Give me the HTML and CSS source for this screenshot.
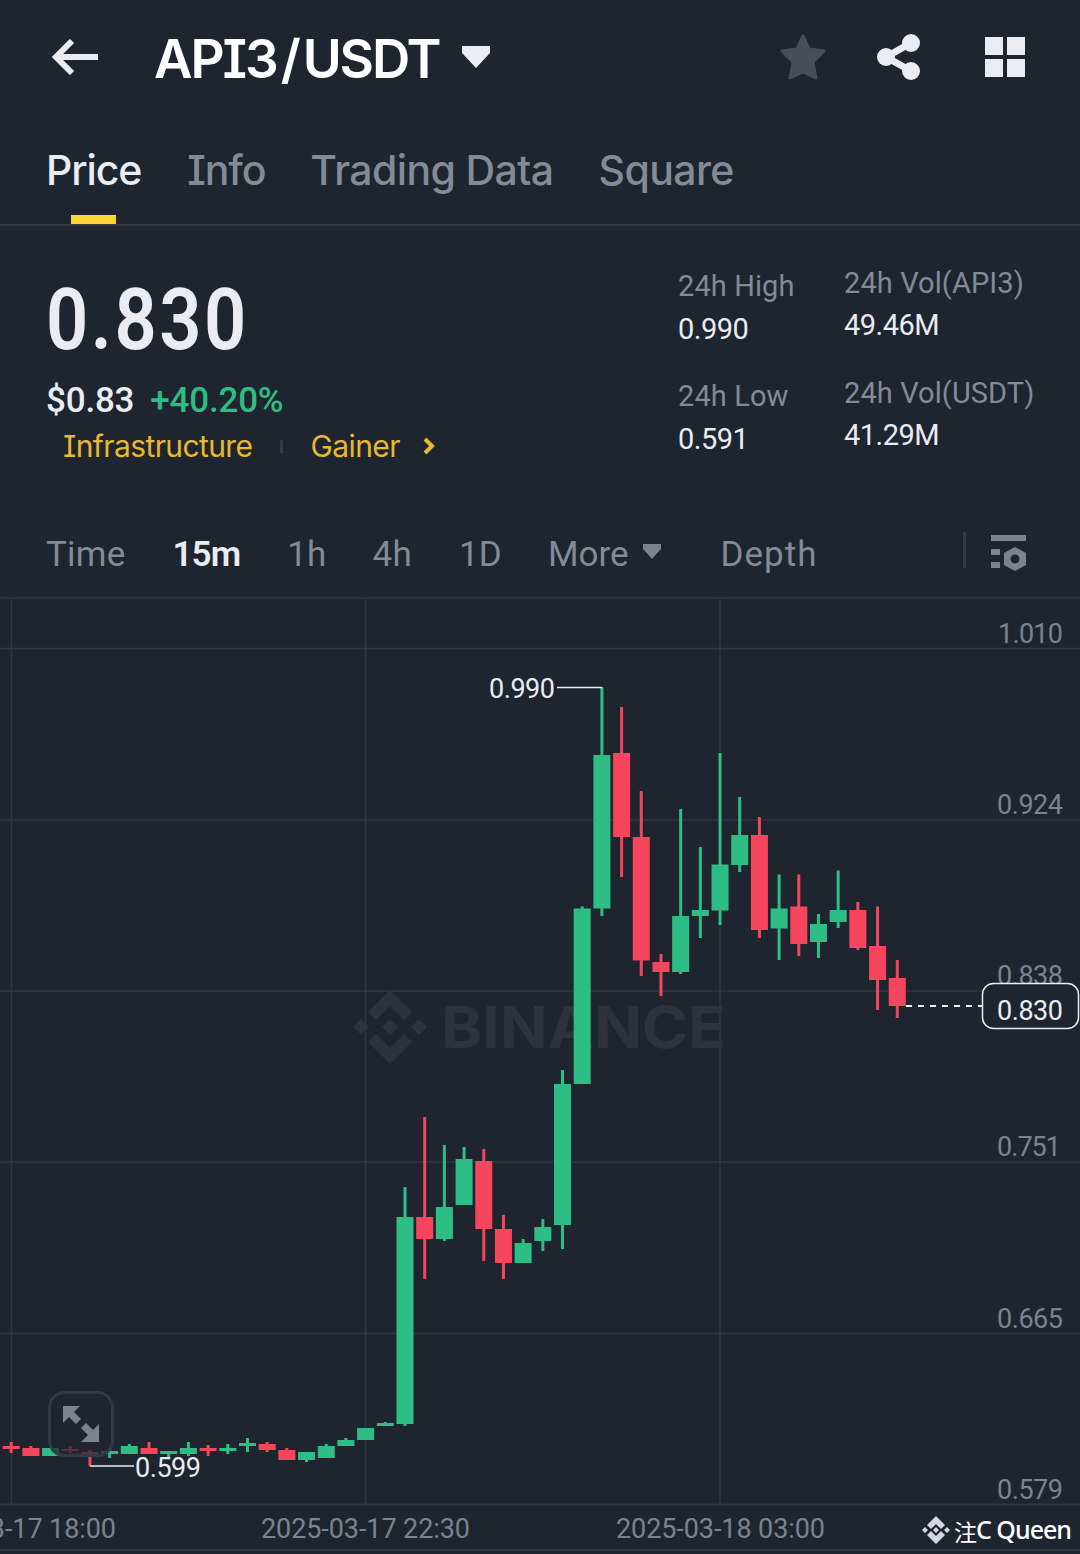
FILE: index.html
```html
<!DOCTYPE html>
<html lang="en">
<head>
    <meta charset="UTF-8">
    <meta name="viewport" content="width=device-width, initial-scale=1.0">
    <title>API3/USDT</title>
    <link rel="stylesheet" href="styles.css">
</head>
<body>
    <header class="header">
        <svg class="back" width="46" height="36" viewBox="0 0 46 36"><path d="M20 2L4 18l16 16M4 18h42" /></svg>
        <h1 class="pair">API3<span class="slash">/</span>USDT</h1>
        <svg class="pair-caret" width="28" height="22" viewBox="0 0 28 22"><path d="M0 0h28v7L14 22 0 7z" /></svg>
        <div class="header-actions">
            <svg class="star" width="46" height="48" viewBox="0 0 46 48"><path d="M23 3l6 13 15 2-11 11 3 16-13-6-13 6 3-16L2 18l15-2z" /></svg>
            <svg class="share" width="44" height="48" viewBox="0 0 44 48">
                <path d="M9 24L34 10M9 24L34 38" />
                <circle cx="9" cy="24" r="9" />
                <circle cx="34" cy="10" r="9" />
                <circle cx="34" cy="38" r="9" />
            </svg>
            <svg class="apps" width="40" height="40" viewBox="0 0 40 40"><path d="M0 0h18v18H0zM22 0h18v18H22zM0 22h18v18H0zM22 22h18v18H22z" /></svg>
        </div>
    </header>

    <nav class="tabs">
        <a class="tab active">Price</a>
        <a class="tab info">Info</a>
        <a class="tab trading">Trading Data</a>
        <a class="tab square">Square</a>
    </nav>

    <section class="summary">
        <div class="quote">
            <div class="last-price">0.830</div>
            <div class="change-row">
                <span class="fiat">$0.83</span>
                <span class="change">+40.20%</span>
            </div>
            <div class="tags">
                <span class="tag">Infrastructure</span>
                <span class="tag-divider"></span>
                <span class="tag gainer">Gainer</span>
                <svg class="tag-arrow" width="12" height="18" viewBox="0 0 12 18"><path d="M2 2l7 7-7 7" /></svg>
            </div>
        </div>
        <div class="stats">
            <div class="stat-col">
                <div class="stat">
                    <div class="stat-label">24h High</div>
                    <div class="stat-value">0.990</div>
                </div>
                <div class="stat">
                    <div class="stat-label">24h Low</div>
                    <div class="stat-value">0.591</div>
                </div>
            </div>
            <div class="stat-col volume">
                <div class="stat">
                    <div class="stat-label">24h Vol(API3)</div>
                    <div class="stat-value">49.46M</div>
                </div>
                <div class="stat">
                    <div class="stat-label">24h Vol(USDT)</div>
                    <div class="stat-value">41.29M</div>
                </div>
            </div>
        </div>
    </section>

    <div class="intervals">
        <span class="interval time">Time</span>
        <span class="interval active">15m</span>
        <span class="interval h1">1h</span>
        <span class="interval h4">4h</span>
        <span class="interval d1">1D</span>
        <span class="interval more">More</span>
        <svg class="more-caret" width="18" height="15" viewBox="0 0 18 15"><path d="M0 0h18v5L9 15 0 5z" /></svg>
        <span class="interval depth">Depth</span>
        <span class="interval-divider"></span>
        <svg class="settings" width="35" height="36" viewBox="0 0 35 36">
            <path d="M0 0h35v6H0zM0 14h9v6H0zM0 27h9v6H0z" />
            <path fill-rule="evenodd" d="M24 12l11 6v12l-11 6-11-6V18zM24 19.500a4.500 4.500 0 1 0 0 9a4.500 4.500 0 1 0 0-9z" />
        </svg>
    </div>

    <div class="chart">
        <svg width="1080" height="955" viewBox="0 599 1080 955">
            <g class="grid">
                <path d="M0 648.500H1080M0 820H1080M0 991H1080M0 1162H1080M0 1333.500H1080" />
                <path d="M11.500 599V1504M365.500 599V1504M720 599V1504" />
                <path class="axis-line" d="M0 1504.500H1080M0 1550H1080" />
            </g>

            <g class="watermark">
                <path d="M390 990l22 22-8 8-14-14-14 14-8-8zM390 1064l22-22-8-8-14 14-14-14-8 8zM390 1019l8 8-8 8-8-8zM361 1019l8 8-8 8-8-8zM419 1019l8 8-8 8-8-8z" />
                <text x="441" y="1047.500" textLength="285" lengthAdjust="spacingAndGlyphs">BINANCE</text>
            </g>

            <g id="candles"></g>

            <g class="price-labels">
                <text x="998" y="643" textLength="65">1.010</text>
                <text x="997" y="814" textLength="66">0.924</text>
                <text x="997" y="985" textLength="66">0.838</text>
                <text x="997" y="1156" textLength="64">0.751</text>
                <text x="997" y="1328" textLength="66">0.665</text>
                <text x="997" y="1499" textLength="66">0.579</text>
            </g>

            <g class="date-labels">
                <text x="-93" y="1538" textLength="209">2025-03-17 18:00</text>
                <text x="261" y="1538" textLength="209">2025-03-17 22:30</text>
                <text x="616" y="1538" textLength="209">2025-03-18 03:00</text>
            </g>

            <path class="current-line" d="M906 1006H982" />
            <rect class="current-box" x="982.500" y="983.500" width="96" height="45" rx="11" />
            <text class="current-price" x="997" y="1020" textLength="66">0.830</text>

            <g class="extremes">
                <path d="M557 687.500H602M90 1466H134" />
                <text x="489" y="698" textLength="66">0.990</text>
                <text x="135" y="1477" textLength="66">0.599</text>
            </g>

            <g class="expand">
                <rect x="49.500" y="1392.500" width="63" height="63" rx="15" />
                <path d="M63 1406h17l-6 6 7 7-5 5-7-7-6 6zM99 1442v-18l-6 6-7-7-5 5 7 7-7 7z" />
            </g>

            <g class="signature">
                <path d="M936 1516l9 9-4 4-5-5-5 5-4-4zM936 1544l9-9-4-4-5 5-5-5-4 4zM936 1527l3 3-3 3-3-3zM925 1527l3 3-3 3-3-3zM947 1527l3 3-3 3-3-3z" />
                <text class="signature-cjk" x="954" y="1541">注</text>
                <text x="976" y="1539" textLength="96">C Queen</text>
            </g>
        </svg>
    </div>

    <script src="chart.js"></script>
</body>
</html>
```
FILE: styles.css
```css
body {
    margin: 0;
    width: 1080px;
    height: 1554px;
    overflow: hidden;
    background-color: #1f252f;
    color: #eaecf2;
    font-family: Inter, "Noto Sans", sans-serif;
    font-feature-settings: "cv08";
}

svg {
    display: block;
    flex-shrink: 0;
}

.header {
    display: flex;
    align-items: center;
    height: 113px;
    padding: 0 55px 0 52px;
}

.back path {
    fill: none;
    stroke: #eaecf2;
    stroke-width: 6;
}

.pair {
    margin: 4px 0 0 56px;
    font-size: 53px;
    line-height: 60px;
    font-weight: 600;
    letter-spacing: -2.1px;
    color: #fff;
}

.slash {
    margin: 0 4px;
}

.pair-caret {
    margin-left: 23px;
    fill: #eaecf2;
}

.header-actions {
    display: flex;
    align-items: center;
    margin-left: auto;
}

.star {
    fill: #474d5b;
    stroke: #474d5b;
    stroke-width: 3;
    stroke-linejoin: round;
}

.share {
    margin: 0 64px 0 51px;
    fill: #eaecf2;
}

.share path {
    stroke: #eaecf2;
    stroke-width: 7;
}

.apps {
    fill: #eaecf2;
}

.tabs {
    display: flex;
    height: 111px;
    border-bottom: 2px solid #333945;
    padding-left: 46px;
    gap: 46px;
}

.tab {
    font-size: 41px;
    line-height: 114px;
    font-weight: 500;
    letter-spacing: -1.1px;
    color: #848a97;
    white-space: nowrap;
}

.tab.trading,
.tab.square {
    letter-spacing: -0.6px;
}

.tab.trading {
    margin-left: -1px;
}

.tab.square {
    margin-left: -1px;
}

.tab.active {
    color: #eaecf2;
    position: relative;
}

.tab.active::after {
    content: "";
    position: absolute;
    left: 25px;
    bottom: 0;
    width: 45px;
    height: 9px;
    background: #fcd535;
}

.summary {
    display: flex;
    height: 283px;
}

.quote {
    width: 678px;
    padding-top: 44px;
}

.last-price {
    margin-left: 46px;
    height: 100px;
    font: 600 86px/100px Roboto, sans-serif;
    letter-spacing: 3px;
    transform: scaleX(0.86);
    transform-origin: left;
}

.change-row {
    display: flex;
    gap: 16px;
    margin: 10px 0 0 46px;
    font: 500 35px/42px Roboto, sans-serif;
    letter-spacing: -0.2px;
}

.change {
    color: #2ebd85;
}

.tags {
    display: flex;
    align-items: center;
    height: 48px;
    margin-left: 63px;
    color: #e8b92f;
}

.tag {
    font-size: 30px;
    letter-spacing: -0.6px;
}

.tag-divider {
    width: 3px;
    height: 13px;
    margin: 0 27px 0 28px;
    background: #333945;
}

.tag-arrow {
    margin-left: 23px;
    fill: none;
    stroke: #e8b92f;
    stroke-width: 4;
}

.stats {
    display: flex;
}

.stat-col {
    width: 166px;
    padding-top: 39px;
}

.stat-col.volume {
    width: 236px;
    padding-top: 36px;
}

.stat {
    height: 110px;
    font: 29px/43px Roboto, sans-serif;
    white-space: nowrap;
}

.volume .stat {
    line-height: 42px;
}

.stat-label {
    color: #848a97;
    letter-spacing: 0.1px;
}

.stat-value {
    letter-spacing: -0.5px;
}

.intervals {
    display: flex;
    align-items: center;
    height: 88px;
    padding-left: 46px;
    border-bottom: 2px solid #2b303b;
    font: 35px/42px Roboto, sans-serif;
    letter-spacing: 0.2px;
    color: #848a97;
}

.interval {
    margin-top: 4px;
}

.interval.active {
    color: #eaecf2;
    font-weight: 600;
    letter-spacing: -0.9px;
}

.interval + .interval {
    margin-left: 47px;
}

.interval.more {
    margin-left: 46px;
    letter-spacing: 0;
}

.interval + .h4 {
    margin-left: 46px;
}

.interval.depth {
    letter-spacing: 1px;
}

.more-caret {
    margin: -4px 60px 0 14px;
    fill: #7c8290;
}

.interval-divider {
    width: 3px;
    height: 36px;
    margin: -6px 25px 0 auto;
    background: #333945;
}

.settings {
    margin-right: 54px;
    fill: #7c8290;
}

/* chart */
.chart text {
    font: 27px Roboto, sans-serif;
}

.grid path {
    fill: none;
    stroke: #303641;
    stroke-width: 1.5;
}

.grid .axis-line {
    stroke-width: 2;
}

.watermark {
    fill: #2d323d;
}

.chart .watermark text {
    font: 700 58px Inter, sans-serif;
    font-feature-settings: normal;
}

.up {
    fill: #2ebd85;
}

.down {
    fill: #f6465d;
}

.price-labels,
.date-labels {
    fill: #7c828f;
}

.current-line {
    stroke: #eaecf2;
    stroke-width: 2;
    stroke-dasharray: 6 6;
}

.current-box {
    fill: #1f252f;
    stroke: #eaecf2;
    stroke-width: 1.5;
}

.current-price,
.extremes text {
    fill: #eaecf2;
}

.extremes path {
    stroke: #eaecf2;
    stroke-width: 1.5;
}

.expand rect {
    fill: #1f252f;
    fill-opacity: 0.7;
    stroke: #333945;
    stroke-width: 3;
}

.expand path {
    fill: #7c8290;
}

.signature path {
    fill: #d3d6de;
}

.chart .signature text {
    fill: #fff;
    font: 500 25px "Noto Sans", sans-serif;
}

.chart .signature .signature-cjk {
    font: 23px "Noto Sans CJK SC", sans-serif;
}
```
FILE: chart.js
```js
// one row per 15m candle: direction, high, body top, body bottom, low
const candles = [
    ['down', 1442, 1446, 1449, 1453],
    ['down', 1446, 1448, 1456, 1456],
    ['up', 1448, 1448, 1456, 1456],
    ['down', 1446, 1449, 1451, 1453],
    ['down', 1450, 1452, 1454, 1466],
    ['up', 1449, 1451, 1454, 1458],
    ['up', 1444, 1446, 1454, 1454],
    ['down', 1442, 1448, 1454, 1454],
    ['up', 1451, 1451, 1454, 1458],
    ['up', 1442, 1448, 1454, 1456],
    ['down', 1445, 1448, 1451, 1456],
    ['up', 1444, 1448, 1451, 1454],
    ['up', 1438, 1443, 1446, 1452],
    ['down', 1442, 1444, 1450, 1452],
    ['down', 1448, 1450, 1460, 1460],
    ['up', 1452, 1452, 1460, 1462],
    ['up', 1444, 1446, 1458, 1458],
    ['up', 1438, 1440, 1446, 1446],
    ['up', 1428, 1428, 1440, 1440],
    ['up', 1422, 1423, 1426, 1426],
    ['up', 1187, 1217, 1424, 1426],
    ['down', 1117, 1217, 1239, 1279],
    ['up', 1145, 1207, 1239, 1241],
    ['up', 1147, 1159, 1205, 1205],
    ['down', 1149, 1161, 1229, 1261],
    ['down', 1215, 1229, 1263, 1279],
    ['up', 1239, 1243, 1263, 1263],
    ['up', 1219, 1227, 1241, 1251],
    ['up', 1070, 1084, 1225, 1249],
    ['up', 906.5, 908.5, 1084, 1084],
    ['up', 687, 755, 908.5, 916],
    ['down', 707, 753, 837, 877],
    ['down', 791, 837, 960.5, 976],
    ['down', 954, 962, 972, 996],
    ['up', 809, 916, 972, 974],
    ['up', 847, 910, 916, 938],
    ['up', 753, 864.5, 910.5, 925],
    ['up', 797, 835, 865, 872],
    ['down', 817, 835, 930, 938],
    ['up', 874.5, 908.5, 928.5, 960],
    ['down', 874.5, 906.5, 944, 956],
    ['up', 914, 924, 942, 958],
    ['up', 870.5, 910, 922, 928],
    ['down', 902, 910, 948, 950],
    ['down', 906.5, 946, 980, 1010],
    ['down', 960, 978, 1006, 1018]
];

const group = document.getElementById('candles');

function addRect(x, y, width, height, direction) {
    const rect = document.createElementNS('http://www.w3.org/2000/svg', 'rect');
    rect.setAttribute('x', x);
    rect.setAttribute('y', y);
    rect.setAttribute('width', width);
    rect.setAttribute('height', height);
    rect.setAttribute('class', direction);
    group.appendChild(rect);
}

candles.forEach(([direction, high, top, bottom, low], i) => {
    const x = 11.2 + i * 19.69;
    addRect(x - 1.5, high, 3, low - high, direction);
    addRect(x - 8.5, top, 17, bottom - top, direction);
});
```
